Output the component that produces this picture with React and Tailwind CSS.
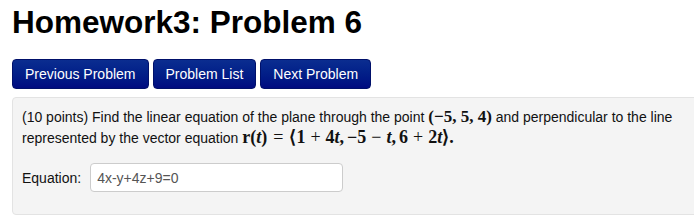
import React from 'react';

const buttons = ['Previous Problem', 'Problem List', 'Next Problem'];

export default function App() {
    return (
        <div className="w-full h-[219px] overflow-hidden bg-white text-black font-['Liberation_Sans',Arial,sans-serif]">
            <div className="pl-3 pt-[2px]">
                <h1 className="text-[31.5px] leading-[40px] font-bold">Homework3: Problem 6</h1>

                {/* navigation */}
                <div className="flex gap-[4px] mt-[17px]">
                    {buttons.map(b => (
                        <button
                            key={b}
                            className="h-[30px] px-[12px] rounded-[4px] border border-[#00106a] bg-gradient-to-b from-[#0b2d90] to-[#000a80] text-white text-[14px] leading-[20px]"
                        >
                            {b}
                        </button>
                    ))}
                </div>

                {/* problem panel */}
                <div className="mt-[8px] w-[700px] h-[118px] bg-[#f4f4f4] border border-[#e3e3e3] rounded-[4px] pl-[9px] pt-[9px] text-[14px] leading-[20px] text-[#111111]">
                    <p className="w-[662px]">
                        (10 points) Find the linear equation of the plane through the point{' '}
                        <span className="font-['Liberation_Serif',serif] text-[17px] font-bold">(−5, 5, 4)</span>{' '}
                        and perpendicular to the line represented by the vector equation{' '}
                        <span className="font-['Liberation_Serif',serif] text-[18px] leading-[20px] font-bold">
                            r(<i>t</i>)<span className="inline-block mx-[6px] font-normal">=</span>⟨1<span className="inline-block mx-[5px] font-normal">+</span>4<i>t</i>,<span className="inline-block ml-[3px]">−5</span><span className="inline-block mx-[5px] font-normal">−</span><i>t</i>,<span className="inline-block ml-[3px]">6</span><span className="inline-block mx-[5px] font-normal">+</span>2<i>t</i>⟩.
                        </span>
                    </p>

                    <div className="flex items-center gap-[9px] mt-[15px]">
                        <label>Equation:</label>
                        <input
                            type="text"
                            defaultValue="4x-y+4z+9=0"
                            className="w-[253px] h-[29px] px-[6px] bg-white border border-[#cccccc] rounded-[4px] text-[14px] text-[#555555] outline-none"
                        />
                    </div>
                </div>
            </div>
        </div>
    );
}
